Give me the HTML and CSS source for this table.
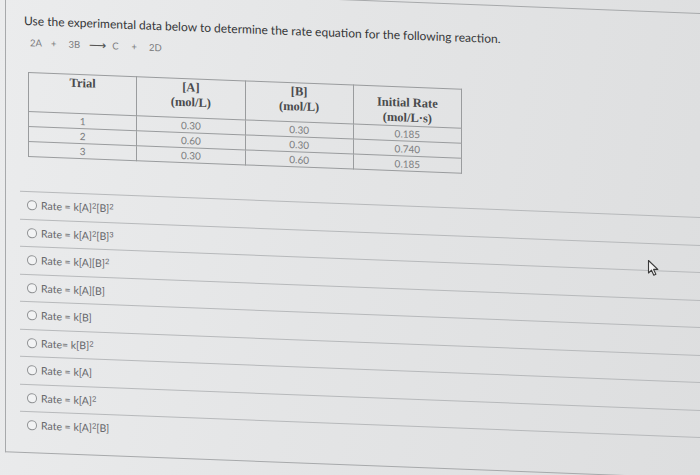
FILE: index.html
```html
<!DOCTYPE html>
<html lang="en">
<head>
<meta charset="utf-8">
<title>Rate equation question</title>
<link rel="stylesheet" href="styles.css">
</head>
<body>
<div class="page">
  <div class="panel">
    <p class="prompt">Use the experimental data below to determine the rate equation for the following reaction.</p>
    <p class="equation"><span>2A</span><span class="op">+</span><span>3B</span><span class="arrow">&#10230;</span><span class="c">C</span><span class="op">+</span><span>2D</span></p>
    <table class="data">
      <thead>
        <tr>
          <th>Trial</th>
          <th>[A]<br>(mol/L)</th>
          <th>[B]<br>(mol/L)</th>
          <th class="rate">Initial Rate<br>(mol/L·s)</th>
        </tr>
      </thead>
      <tbody>
        <tr><td>1</td><td>0.30</td><td>0.30</td><td>0.185</td></tr>
        <tr><td>2</td><td>0.60</td><td>0.30</td><td>0.740</td></tr>
        <tr><td>3</td><td>0.30</td><td>0.60</td><td>0.185</td></tr>
      </tbody>
    </table>
    <ul class="options">
      <li><span class="radio"></span><span class="label">Rate = k[A]<sup>2</sup>[B]<sup>2</sup></span></li>
      <li><span class="radio"></span><span class="label">Rate = k[A]<sup>2</sup>[B]<sup>3</sup></span></li>
      <li><span class="radio"></span><span class="label">Rate = k[A][B]<sup>2</sup></span></li>
      <li><span class="radio"></span><span class="label">Rate = k[A][B]</span></li>
      <li><span class="radio"></span><span class="label">Rate = k[B]</span></li>
      <li><span class="radio"></span><span class="label">Rate= k[B]<sup>2</sup></span></li>
      <li><span class="radio"></span><span class="label">Rate = k[A]</span></li>
      <li><span class="radio"></span><span class="label">Rate = k[A]<sup>2</sup></span></li>
      <li><span class="radio"></span><span class="label">Rate = k[A]<sup>2</sup>[B]</span></li>
    </ul>
  </div>
</div>
<svg class="cursor" width="14" height="18" viewBox="0 0 14 18" aria-hidden="true">
  <path d="M1.5 1.5 L1.5 14 L4.5 11.2 L6.8 16.2 L8.9 15.3 L6.6 10.4 L10.8 10.4 Z" fill="#f4f4f4" stroke="#3a3a3a" stroke-width="1.1" stroke-linejoin="round"/>
</svg>
</body>
</html>
```

FILE: styles.css
```css
html, body {
  margin: 0;
  padding: 0;
}
body {
  width: 700px;
  height: 475px;
  overflow: hidden;
  position: relative;
  background: linear-gradient(100deg, #ebeced 0%, #e4e5e6 45%, #dddedf 100%);
  font-family: Lato, "Open Sans", sans-serif;
}
.page {
  transform: skewY(2.2deg);
  transform-origin: 0 0;
}
.panel {
  margin: -14px 0 0 5px;
  width: 690px;
  border: 1px solid #a7a9ab;
  border-right: none;
  padding: 25px 0 13px 18px;
  box-sizing: content-box;
}
.prompt {
  margin: 0;
  font-size: 12px;
  line-height: 16px;
  color: #353638;
}
.equation {
  margin: 8px 0 0 6px;
  font-size: 9.5px;
  line-height: 12px;
  color: #7a7b7d;
  display: flex;
  align-items: center;
}
.equation span {
  margin-right: 9px;
}
.equation .op {
  margin-right: 12px;
}
.equation .c {
  margin-right: 13px;
}
.equation .arrow {
  font-size: 12px;
  color: #555;
  margin-right: 6px;
}
.data {
  margin: 23px 0 0 4px;
  border-collapse: collapse;
  width: 434px;
  table-layout: fixed;
  border: 1px solid #8e9092;
}
.data th, .data td {
  border: 1px solid #9a9c9e;
  padding: 0;
  text-align: center;
}
.data th {
  height: 32px;
  vertical-align: top;
  font-family: "Liberation Serif", serif;
  font-weight: bold;
  font-size: 12.5px;
  line-height: 15px;
  color: #4a4b4d;
  padding-top: 1px;
}
.data th.rate {
  padding-top: 8px;
  height: 25px;
}
.data td {
  height: 14px;
  font-size: 10px;
  line-height: 14px;
  color: #7c7d7f;
}
.options {
  list-style: none;
  margin: 34px 0 0 -4px;
  padding: 0;
}
.options li {
  height: 26.5px;
  border-top: 1px solid #b7b9bb;
  display: flex;
  align-items: center;
  padding-left: 7px;
  font-size: 10.5px;
  color: #66676a;
}
.label {
  line-height: 12px;
}
.options sup {
  font-size: 7.5px;
  line-height: 0;
  vertical-align: 3px;
}
.radio {
  width: 8px;
  height: 8px;
  border: 1.5px solid #8f9193;
  border-radius: 50%;
  background: #f2f3f4;
  margin-right: 4px;
  flex: none;
}
.cursor {
  position: absolute;
  left: 647px;
  top: 259px;
}
```
